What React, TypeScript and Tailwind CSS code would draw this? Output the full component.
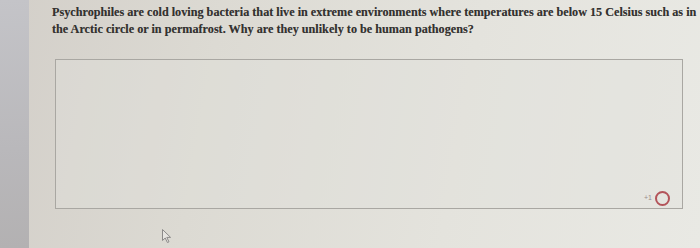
export default function App() {
  return (
    <div className="flex h-[248px] w-[700px] overflow-hidden bg-[linear-gradient(100deg,#d3cfc9_0%,#dcdad3_30%,#e4e3dd_65%,#e9e9e4_100%)] font-['Liberation_Serif',serif]">
      {/* left strip */}
      <div className="h-full w-[29px] shrink-0 bg-[linear-gradient(180deg,#c4c4c8_0%,#b9b8bb_60%,#b3b1b2_100%)]" />

      <div className="flex flex-col pl-[23px] pt-[4px]">
        <p className="w-[660px] whitespace-nowrap text-[12.2px] font-bold leading-[17px] text-[#343230] [text-shadow:0_0_0.6px_rgba(40,40,40,0.4)]">
          Psychrophiles are cold loving bacteria that live in extreme environments where temperatures are below 15 Celsius such as in
          <br />
          the Arctic circle or in permafrost. Why are they unlikely to be human pathogens?
        </p>

        <div className="relative ml-[3px] mt-[21px] h-[150px] w-[628px] border border-[#a9a7a2] bg-[#e2e1db]/40">
          <div className="absolute bottom-[2px] right-[12px] flex items-center gap-[3px]">
            <span className="font-['Liberation_Sans',sans-serif] text-[7px] text-[#9a8e8c]">+1</span>
            <span className="block h-[15px] w-[15px] rounded-full border-[2px] border-[#b3545a]" />
          </div>
        </div>

        <div className="ml-[109px] mt-[19px]">
          <svg width="12" height="16" viewBox="0 0 12 16" fill="none">
            <path
              d="M1.5 1.5 L1.5 12.5 L4.2 10 L6.4 14.5 L8 13.8 L5.8 9.4 L9.6 9.4 Z"
              stroke="#8c8a8a"
              strokeWidth="1"
              strokeLinejoin="round"
              fill="#e6e4e0"
            />
          </svg>
        </div>
      </div>
    </div>
  );
}
